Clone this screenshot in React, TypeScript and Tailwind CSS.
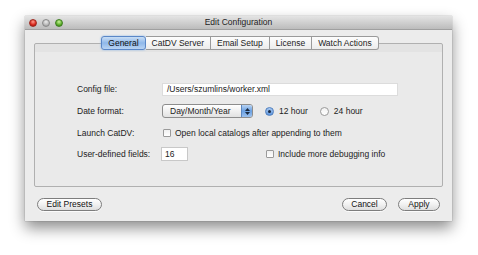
import React from "react";

const font = { fontFamily: '"Liberation Sans", Arial, sans-serif' };

function Tab({ label, active, last, first }: { label: string; active?: boolean; last?: boolean; first?: boolean }) {
  if (active) {
    return (
      <div className="h-[14px] px-[6px] flex items-center justify-center rounded-[3px] border border-[#5a87c7] bg-gradient-to-b from-[#c9def5] via-[#8fb8ea] to-[#b9d4f3] text-[#111] shadow-[0_0_2px_#7eaee8]">
        {label}
      </div>
    );
  }
  return (
    <div
      className={
        "h-[14px] px-[6px] flex items-center justify-center border-y border-r border-[#9a9a9a] bg-gradient-to-b from-[#fdfdfd] to-[#ececec] text-[#222] " +
        (last ? "rounded-r-[3px]" : "") +
        (first ? " border-l" : "")
      }
    >
      {label}
    </div>
  );
}

function Radio({ on }: { on?: boolean }) {
  if (on) {
    return (
      <div className="w-[9px] h-[9px] rounded-full border border-[#4f7fbf] bg-gradient-to-b from-[#a9c9f0] to-[#5d95dc] flex items-center justify-center">
        <div className="w-[3px] h-[3px] rounded-full bg-[#1a2a44]" />
      </div>
    );
  }
  return <div className="w-[9px] h-[9px] rounded-full border border-[#9a9a9a] bg-gradient-to-b from-[#f2f2f2] to-[#ffffff]" />;
}

function Check() {
  return <div className="w-[8px] h-[8px] rounded-[1px] border border-[#9a9a9a] bg-gradient-to-b from-[#f0f0f0] to-[#ffffff]" />;
}

function Btn({ label, w }: { label: string; w: string }) {
  return (
    <div className={`${w} h-[13px] rounded-full border border-[#7d7d7d] bg-gradient-to-b from-[#ffffff] via-[#f1f1f1] to-[#dedede] flex items-center justify-center text-[#111] shadow-[0_1px_0_rgba(255,255,255,0.8)]`}>
      {label}
    </div>
  );
}

export default function App() {
  return (
    <div className="w-[478px] h-[255px] bg-white overflow-hidden pt-[16px] pl-[25px] text-[8.5px] leading-none" style={font}>
      <div className="w-[427px] h-[205px] bg-[#ececec] shadow-[0_7px_14px_rgba(0,0,0,0.45),0_0_1px_rgba(0,0,0,0.4)] flex flex-col">
        {/* title bar */}
        <div className="h-[14px] relative flex items-center bg-gradient-to-b from-[#e4e4e4] to-[#bcbcbc] border-b border-[#a0a0a0]">
          <div className="flex items-center gap-[5px] pl-[4px]">
            <div className="w-[8px] h-[8px] rounded-full bg-[radial-gradient(circle_at_50%_30%,#ff9a8a,#d6251b_60%,#8a1410)] border border-[#9e2a20]" />
            <div className="w-[8px] h-[8px] rounded-full bg-[radial-gradient(circle_at_50%_30%,#ececec,#b8b8b8_60%,#8c8c8c)] border border-[#8a8a8a]" />
            <div className="w-[8px] h-[8px] rounded-full bg-[radial-gradient(circle_at_50%_30%,#c8f29a,#5cae2a_60%,#2f6d14)] border border-[#3f7f22]" />
          </div>
          <div className="absolute inset-0 flex items-center justify-center text-[#222]">Edit Configuration</div>
        </div>
        {/* body */}
        <div className="flex-1 flex flex-col px-[9px] pt-[6px]">
          <div className="flex flex-col">
            <div className="flex justify-center relative z-10 -mb-[7px] pl-[3px]">
              <Tab label="General" active />
              <Tab label="CatDV Server" />
              <Tab label="Email Setup" />
              <Tab label="License" />
              <Tab label="Watch Actions" last />
            </div>
            <div className="h-[144px] border border-[#b0b0b0] rounded-[2px] bg-[linear-gradient(#e3e3e3_0,#e3e3e3_8px,#eaeaea_8px)] flex flex-col pl-[42px] pt-[38px] text-[#222]">
              <div className="flex items-center h-[14px]">
                <div className="w-[85px]">Config file:</div>
                <div className="w-[236px] h-[13px] bg-white border border-[#dcdcdc] flex items-center pl-[4px]">/Users/szumlins/worker.xml</div>
              </div>
              <div className="flex items-center h-[14px] mt-[8px]">
                <div className="w-[85px]">Date format:</div>
                <div className="w-[91px] h-[14px] rounded-[3px] border border-[#8d8d8d] bg-gradient-to-b from-[#ffffff] to-[#e2e2e2] flex items-center overflow-hidden">
                  <div className="flex-1 pl-[7px]">Day/Month/Year</div>
                  <div className="w-[11px] h-full bg-gradient-to-b from-[#b8d3f3] via-[#6aa0e2] to-[#9cc1ee] border-l border-[#5b86c0] flex flex-col items-center justify-center gap-[1px]">
                    <svg width="5" height="3" viewBox="0 0 5 3"><path d="M0 3 L2.5 0 L5 3 Z" fill="#1b2a40" /></svg>
                    <svg width="5" height="3" viewBox="0 0 5 3"><path d="M0 0 L2.5 3 L5 0 Z" fill="#1b2a40" /></svg>
                  </div>
                </div>
                <div className="ml-[12px]"><Radio on /></div>
                <div className="ml-[5px]">12 hour</div>
                <div className="ml-[12px]"><Radio /></div>
                <div className="ml-[5px]">24 hour</div>
              </div>
              <div className="flex items-center h-[14px] mt-[8px]">
                <div className="w-[86px]">Launch CatDV:</div>
                <Check />
                <div className="ml-[4px]">Open local catalogs after appending to them</div>
              </div>
              <div className="flex items-center h-[14px] mt-[7px]">
                <div className="w-[84px]">User-defined fields:</div>
                <div className="w-[27px] h-[14px] bg-white border border-[#c8c8c8] flex items-center pl-[3px]">16</div>
                <div className="ml-[78px]"><Check /></div>
                <div className="ml-[4px]">Include more debugging info</div>
              </div>
            </div>
          </div>
          <div className="flex items-center mt-[11px] px-[3px]">
            <Btn label="Edit Presets" w="w-[65px]" />
            <div className="flex-1" />
            <Btn label="Cancel" w="w-[45px]" />
            <div className="w-[11px]" />
            <Btn label="Apply" w="w-[42px]" />
          </div>
        </div>
      </div>
    </div>
  );
}
